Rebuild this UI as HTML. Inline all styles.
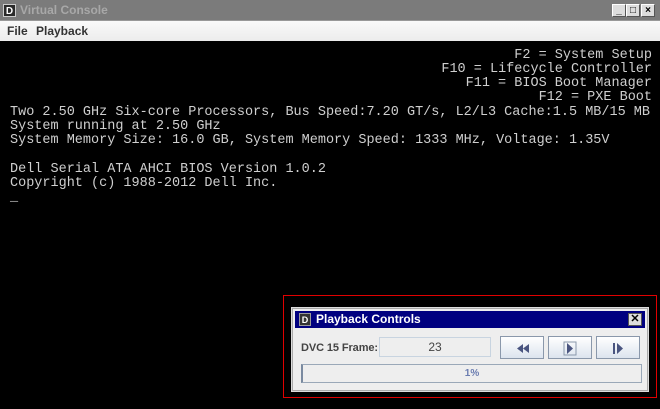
<!DOCTYPE html>
<html><head><style>
*{margin:0;padding:0;box-sizing:border-box}
body{width:660px;height:409px;overflow:hidden;background:#000;font-family:"Liberation Sans",sans-serif;position:relative}
.tb{position:absolute;left:0;top:0;width:660px;height:21px;background:#7b7b7b;border-bottom:1px solid #999}
.tb .ic{position:absolute;left:3px;top:4px;width:13px;height:13px;background:#2a2a2a;color:#fff;font:bold 10px "Liberation Sans";text-align:center;line-height:13px;border:1px solid #ccc}
.tb .t{position:absolute;left:20px;top:3px;color:#a8a8a8;font-weight:bold;font-size:12px}
.wb{position:absolute;top:4px;width:14px;height:13px;background:#ddd;border:1px solid #fff;border-right-color:#555;border-bottom-color:#555;font:bold 10px "Liberation Sans";text-align:center;line-height:11px;color:#000}
.mb{position:absolute;left:0;top:21px;width:660px;height:20px;background:linear-gradient(#fafafa,#ececec);font-size:12px;font-weight:bold;color:#333}
.mb span{position:absolute;top:3px}
pre{position:absolute;left:0;top:0;font-family:"Liberation Mono",monospace;font-size:13.5px;line-height:14.3px;color:#cfcfcf}
.r{position:absolute;right:8px;text-align:right}
.box{position:absolute;left:283px;top:295px;width:374px;height:103px;border:1px solid #e00000;z-index:5}
.dlg{position:absolute;left:292px;top:308px;width:356px;height:83px;background:#eee;border:1px solid #aaa;outline:1px solid #ddd}
.dt{position:absolute;left:2px;top:2px;width:350px;height:17px;background:#000080;color:#fff;font-weight:bold;font-size:12px}
.dt .ic{position:absolute;left:4px;top:2px;width:12px;height:13px;background:#333;font-size:9px;text-align:center;line-height:13px;border:1px solid #999}
.dt .t{position:absolute;left:21px;top:1px}
.dt .x{position:absolute;right:3px;top:2px;width:14px;height:13px;background:#ddd;border:1px solid #555;color:#000;font-size:11px;text-align:center;line-height:11px}
.lb{position:absolute;left:8px;top:33px;font-size:11px;font-weight:bold;color:#444;letter-spacing:-0.1px}
.fd{position:absolute;left:86px;top:28px;width:112px;height:20px;border:1px solid #c8d4e0;background:#eee;text-align:center;font-size:12px;line-height:18px;color:#444}
.bt{position:absolute;top:27px;width:44px;height:23px;border:1px solid #8a98ab;background:linear-gradient(#fff,#dce4ee);}
.pb{position:absolute;left:8px;top:55px;width:341px;height:19px;border:1px solid #9aa8b8;border-left:2px solid #7a8aa0;background:#eee;text-align:center;color:#6a7cb0;font-size:10px;font-weight:bold;line-height:17px}
</style></head><body>
<div class="tb"><div class="ic">D</div><div class="t">Virtual Console</div>
<div class="wb" style="left:612px">_</div><div class="wb" style="left:626px">□</div><div class="wb" style="left:641px">×</div></div>
<div class="mb"><span style="left:7px">File</span><span style="left:36px">Playback</span></div>
<pre class="r" style="top:48.5px">F2 = System Setup
F10 = Lifecycle Controller
F11 = BIOS Boot Manager
F12 = PXE Boot</pre>
<pre style="left:10px;top:105.7px">Two 2.50 GHz Six-core Processors, Bus Speed:7.20 GT/s, L2/L3 Cache:1.5 MB/15 MB
System running at 2.50 GHz
System Memory Size: 16.0 GB, System Memory Speed: 1333 MHz, Voltage: 1.35V

Dell Serial ATA AHCI BIOS Version 1.0.2
Copyright (c) 1988-2012 Dell Inc.
_</pre>
<div class="box"></div>
<div class="dlg">
<div class="dt"><div class="ic">D</div><div class="t">Playback Controls</div><div class="x">✕</div></div>
<div class="lb">DVC 15 Frame:</div>
<div class="fd">23</div>
<div class="bt" style="left:207px"><svg width="44" height="23"><path d="M15 7l6 4.5-6 4.5zM21 7l6 4.5-6 4.5z" fill="#4a5580" transform="matrix(-1 0 0 1 43 0)"/></svg></div>
<div class="bt" style="left:255px"><svg width="44" height="23"><rect x="15" y="5" width="12" height="13" fill="none" stroke="#8a98ab"/><path d="M18 6l6 5.5-6 5.5z" fill="#4a5580"/></svg></div>
<div class="bt" style="left:303px"><svg width="44" height="23"><rect x="16" y="6" width="2" height="11" fill="#4a5580"/><path d="M20 6l6 5.5-6 5.5z" fill="#4a5580"/></svg></div>
<div class="pb">1%</div>
</div>
</body></html>
